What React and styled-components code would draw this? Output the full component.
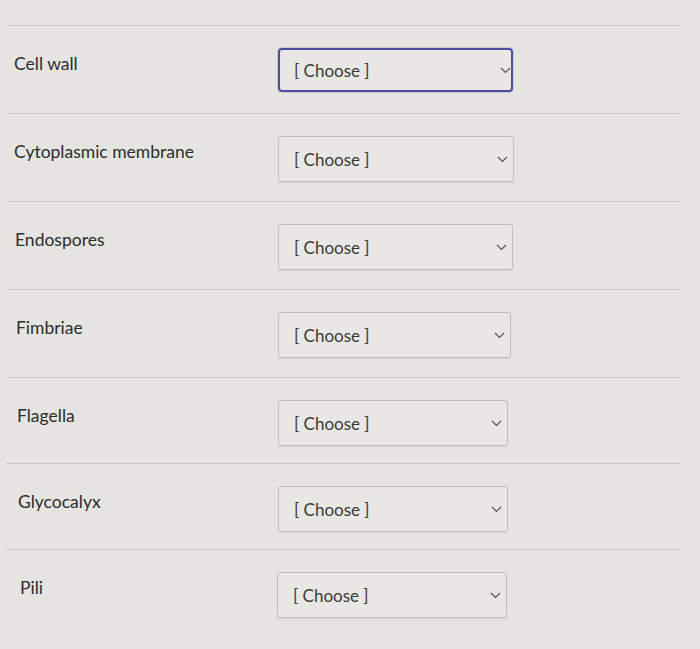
import React from 'react';
import styled, { createGlobalStyle } from 'styled-components';

const GlobalStyle = createGlobalStyle`
  body {
    margin: 0;
    background: #e6e4e0;
    font-family: Lato, "Open Sans", sans-serif;
    color: #2f2f2f;
  }
`;

const Page = styled.div`
  width: 700px;
  height: 649px;
  overflow: hidden;
  padding-top: 25px;
  box-sizing: border-box;
`;

const List = styled.div`
  margin-left: 6px;
  width: 674px;
  border-top: 1px solid #c9c7c3;
`;

const Row = styled.div`
  display: grid;
  grid-template-columns: ${p => 272 + p.$shift}px ${p => p.$w}px;
  align-items: start;
  height: ${p => p.$h}px;
  box-sizing: border-box;
  padding-top: 22px;
  border-bottom: ${p => (p.$last ? 'none' : '1px solid #c9c7c3')};
`;

const Label = styled.div`
  font-size: 17.5px;
  line-height: 20px;
  margin-top: 6px;
  padding-left: ${p => p.$indent}px;
  color: #2c2c2c;
`;

const Select = styled.div`
  position: relative;
  height: ${p => (p.$focused ? 44 : 46)}px;
  box-sizing: border-box;
  display: flex;
  align-items: center;
  padding: 0 30px 0 ${p => (p.$focused ? 14 : 15)}px;
  background: #e9e7e3;
  border: ${p => (p.$focused ? '2px solid #4b4f9e' : '1px solid #bfbdb9')};
  border-radius: ${p => (p.$focused ? 4 : 3)}px;
  box-shadow: ${p =>
    p.$focused ? '0 0 0 1px #c8c8d6' : '0 1px 1px rgba(0,0,0,0.06)'};
  font-size: 17px;
  color: #3a3a3a;
  cursor: pointer;
`;

const Chevron = styled.svg`
  position: absolute;
  right: ${p => (p.$focused ? 0 : 5)}px;
  top: 50%;
  margin-top: -3px;
  width: 11px;
  height: 7px;
`;

const rows = [
  { label: 'Cell wall', h: 88, indent: 8, shift: 0, w: 235, focused: true },
  { label: 'Cytoplasmic membrane', h: 88, indent: 8, shift: 0, w: 236 },
  { label: 'Endospores', h: 88, indent: 9, shift: 0, w: 235 },
  { label: 'Fimbriae', h: 88, indent: 10, shift: 0, w: 233 },
  { label: 'Flagella', h: 86, indent: 11, shift: 0, w: 230 },
  { label: 'Glycocalyx', h: 86, indent: 12, shift: 0, w: 230 },
  { label: 'Pili', h: 100, indent: 14, shift: -1, w: 230, last: true },
];

const App = () => (
  <>
    <GlobalStyle />
    <Page>
      <List>
        {rows.map(r => (
          <Row key={r.label} $h={r.h} $shift={r.shift} $w={r.w} $last={r.last}>
            <Label $indent={r.indent}>{r.label}</Label>
            <Select $focused={r.focused}>
              [ Choose ]
              <Chevron $focused={r.focused} viewBox="0 0 11 7">
                <path d="M1 1 L5.5 5.5 L10 1" fill="none" stroke="#555" strokeWidth="1.2" />
              </Chevron>
            </Select>
          </Row>
        ))}
      </List>
    </Page>
  </>
);

export default App;
